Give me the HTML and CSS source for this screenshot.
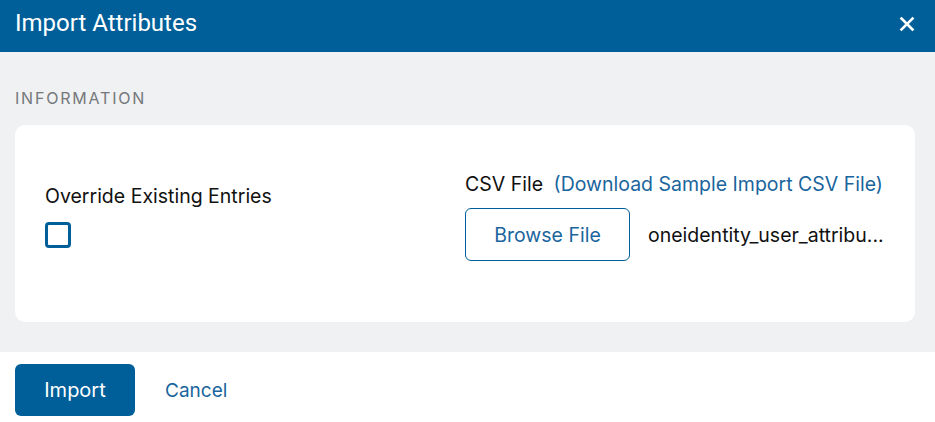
FILE: index.html
```html
<!DOCTYPE html>
<html>
<head>
<meta charset="utf-8">
<link rel="stylesheet" href="styles.css">
</head>
<body>
<div class="dialog">
  <header class="header">
    <span class="title">Import Attributes</span>
    <button class="close" aria-label="Close">
      <svg width="16" height="16" viewBox="0 0 16 16"><path d="M2.5 2.5L13.5 13.5M13.5 2.5L2.5 13.5" stroke="#fff" stroke-width="2.6" stroke-linecap="square"/></svg>
    </button>
  </header>
  <main class="body">
    <div class="section-label">INFORMATION</div>
    <div class="card">
      <div class="col">
        <div class="label">Override Existing Entries</div>
        <span class="checkbox"></span>
      </div>
      <div class="col">
        <div class="label">CSV File <a class="link">(Download Sample Import CSV File)</a></div>
        <div class="file-row">
          <button class="btn-outline">Browse File</button>
          <span class="filename">oneidentity_user_attribu...</span>
        </div>
      </div>
    </div>
  </main>
  <footer class="footer">
    <button class="btn-primary">Import</button>
    <button class="btn-text">Cancel</button>
  </footer>
</div>
</body>
</html>
```
FILE: styles.css
```css
* { box-sizing: border-box; }
html, body { margin: 0; padding: 0; }
body {
  width: 935px;
  height: 422px;
  overflow: hidden;
  font-family: Inter, "Noto Sans", sans-serif;
  background: #f0f1f3;
}
.dialog { display: flex; flex-direction: column; height: 422px; }
.header {
  flex: 0 0 52px;
  height: 52px;
  background: #005f99;
  display: flex;
  align-items: center;
  justify-content: space-between;
  padding: 0 20px 0 15px;
}
.title {
  color: #fff;
  font-family: Roboto, "Liberation Sans", sans-serif;
  font-size: 24px;
  padding-bottom: 7px;
}
.close {
  background: none;
  border: 0;
  padding: 0 0 4px 0;
  display: flex;
  cursor: pointer;
}
.body {
  flex: 1;
  padding: 37px 20px 30px 15px;
}
.section-label {
  font-size: 16px;
  letter-spacing: 1.8px;
  color: #75787b;
  line-height: 18px;
  margin-bottom: 18px;
}
.card {
  background: #fff;
  border-radius: 10px;
  height: 197px;
  padding: 47px 30px 0 30px;
  display: grid;
  grid-template-columns: 1fr 1fr;
}
.col { display: flex; flex-direction: column; }
.label {
  font-size: 19.5px;
  color: #111;
  line-height: 24px;
}
.col:first-child .label { margin-top: 12px; margin-bottom: 14px; }
.checkbox {
  width: 26px;
  height: 26px;
  border: 3px solid #005f99;
  border-radius: 4px;
}
.link { color: #1a659d; margin-left: 5px; }
.file-row {
  display: flex;
  align-items: center;
  margin-top: 12px;
}
.btn-outline {
  width: 165px;
  height: 53px;
  border: 1px solid #005f99;
  border-radius: 6px;
  background: #fff;
  color: #1a659d;
  font-family: inherit;
  font-size: 19.5px;
}
.filename {
  margin-left: 18px;
  font-size: 19.5px;
  color: #111;
}
.footer {
  flex: 0 0 70px;
  height: 70px;
  background: #fff;
  display: flex;
  align-items: center;
  padding: 12px 15px 6px;
  gap: 30px;
}
.btn-primary {
  width: 120px;
  height: 52px;
  background: #005f99;
  color: #fff;
  border: 0;
  border-radius: 6px;
  font-family: inherit;
  font-size: 20px;
}
.btn-text {
  background: none;
  border: 0;
  padding: 0;
  color: #1a659d;
  font-family: inherit;
  font-size: 19px;
}
```
